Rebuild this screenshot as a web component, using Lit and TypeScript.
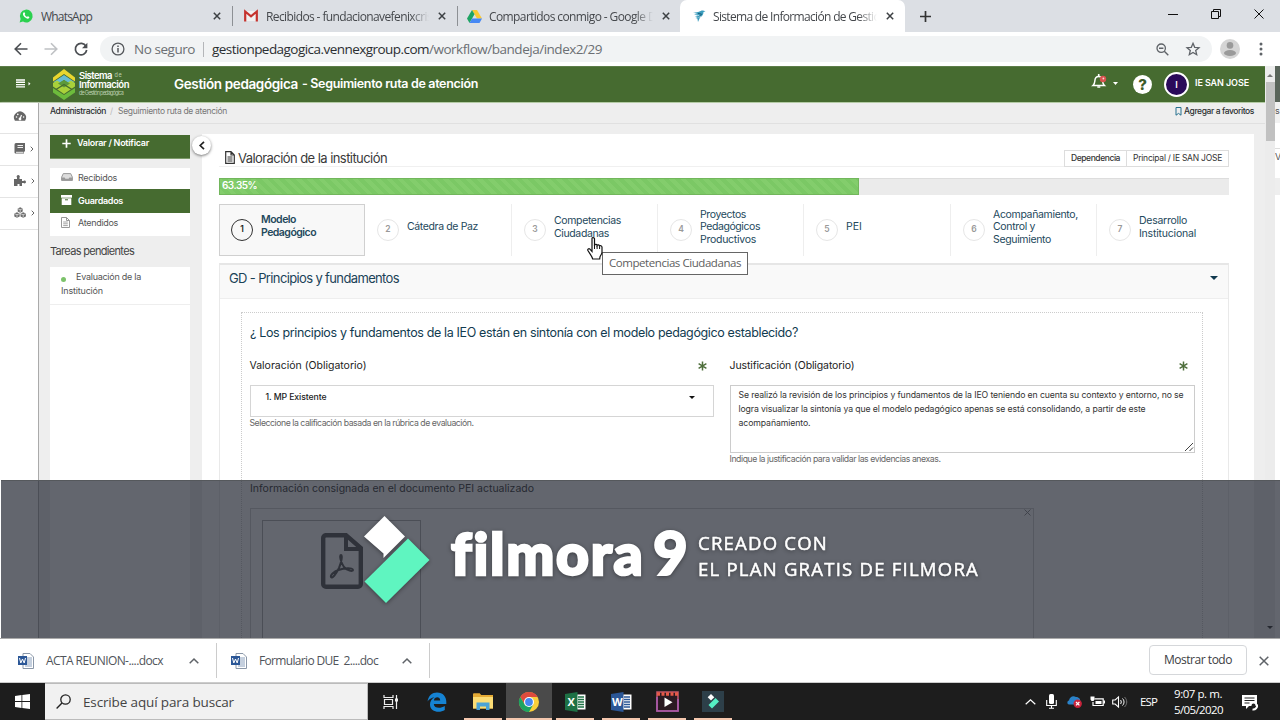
import { LitElement, html, svg, css } from "lit";
import { customElement, property } from "lit/decorators.js";

/* One line of text whose tracking is spread so that it fills a given width. */
@customElement("fit-text")
class FitText extends LitElement {
  @property() text = "";
  @property({ type: Number }) w = 0;
  static styles = css`
    :host { display: inline-block; white-space: pre; flex: none; }
    span { display: inline-block; }
  `;
  updated() {
    const s = this.renderRoot.querySelector("span") as HTMLElement;
    s.style.letterSpacing = "0";
    if (!this.w) return;
    const natural = s.getBoundingClientRect().width;
    s.style.letterSpacing = (this.w - natural) / this.text.length + "px";
  }
  render() {
    return html`<span>${this.text}</span>`;
  }
}

const t = (text: string, w = 0, cls = "") =>
  html`<fit-text class=${cls} .text=${text} .w=${w}></fit-text>`;

const icon = (w: number, h: number, body: unknown, cls = "") =>
  html`<svg class="ic ${cls}" width=${w} height=${h} viewBox="0 0 ${w} ${h}">${body}</svg>`;

const I = {
  whatsapp: icon(14, 14, svg`<path d="M.6 13.400l1-3.500A6.400 6.400 0 1 1 4 12.500z" fill="#2bd14f"/><path d="M4.600 3.500c.5-.4 1-.2 1.200.3l.4 1c0 .5-.5.7-.5 1 .5 1 1.300 1.700 2.300 2.100.4 0 .6-.7 1-.7l1.300.7c.3.5-.4 1.800-1.500 1.800C6.500 9.500 4 7 3.900 5.100c0-.7.3-1.300.7-1.600z" fill="#fff"/>`),
  gmail: icon(14, 12, svg`<path d="M1 1h12v10H1z" fill="#f0f0f0"/><path d="M1.200 11.500V1.500L7 6.300l5.800-4.800v10" fill="none" stroke="#c5322d" stroke-width="2.200"/>`),
  drive: icon(15, 13, svg`<path d="M5 0h5l5 8.600h-5z" fill="#fbc934"/><path d="M5 0L0 8.600 2.500 13 7.500 4.300z" fill="#1fa463"/><path d="M5 8.600h10L12.500 13h-10z" fill="#4688f4"/>`),
  bird: icon(14, 14, svg`<path d="M1 3.500c2 0 4 .2 6-.7 1.500-.8 2.500-1.500 4-1.300l2.500.7-2 .8c0 2.500-1.300 4.500-3.500 5.500L6 13l-.6-3.600L3.500 9l2.500-1-3-.8 2.700-.7L2 5l3.500-.5z" fill="#3b9cbd"/><path d="M6 4.500l3.500.5-2 3" fill="none" stroke="#17607c"/><path d="M4 6l3 .5M6.500 8.500L9 7" stroke="#dff1f7" stroke-width=".7"/>`),
  x: icon(8, 8, svg`<path d="M.8.8l6.400 6.400M7.200.8L.8 7.200" stroke="#3c4043" stroke-width="1.500"/>`),
  plus: icon(11, 11, svg`<path d="M5.500 0v11M0 5.500h11" stroke="#333" stroke-width="1.700"/>`),
  min: icon(10, 10, svg`<path d="M0 5.500h10" stroke="#111"/>`),
  restore: icon(10, 10, svg`<path d="M.5 2.500h7v7h-7zM2.500 2.500v-2h7v7h-2" fill="none" stroke="#111"/>`),
  close: icon(10, 10, svg`<path d="M.5.5l9 9M9.500.5l-9 9" stroke="#111"/>`),
  back: icon(14, 14, svg`<path d="M13.500 7H1.500M7 1.200L1.200 7 7 12.800" fill="none" stroke="#4b4e52" stroke-width="1.600"/>`),
  fwd: icon(14, 14, svg`<path d="M.5 7h12M7 1.200L12.800 7 7 12.800" fill="none" stroke="#bfc1c4" stroke-width="1.600"/>`),
  reload: icon(14, 14, svg`<path d="M12 4.200A5.700 5.700 0 1 0 12.700 8" fill="none" stroke="#4b4e52" stroke-width="1.700"/><path d="M13.400.8v5.400H8z" fill="#4b4e52"/>`),
  info: icon(14, 14, svg`<circle cx="7" cy="7" r="5.900" fill="none" stroke="#55585c" stroke-width="1.300"/><path d="M7 6v4.400M7 3.500v1.500" stroke="#55585c" stroke-width="1.500"/>`),
  lens: icon(13, 13, svg`<circle cx="5.200" cy="5.200" r="4.200" fill="none" stroke="#5f6368" stroke-width="1.300"/><path d="M8.300 8.300l4 4M3 5.200h4.400" stroke="#5f6368" stroke-width="1.400"/>`),
  star: icon(14, 14, svg`<path d="M7 1.300l1.700 4 4.300.4-3.300 2.800 1 4.200L7 10.500l-3.700 2.200 1-4.200L1 5.700l4.300-.4z" fill="none" stroke="#5f6368" stroke-width="1.300"/>`),
  user: icon(20, 20, svg`<circle cx="10" cy="10" r="10" fill="#d5d5d5"/><circle cx="10" cy="6.400" r="3.300" fill="#9a9a9a"/><ellipse cx="10" cy="14" rx="6" ry="3" fill="#9a9a9a"/>`),
  dots: icon(4, 14, svg`<circle cx="2" cy="2" r="1.500" fill="#5f6368"/><circle cx="2" cy="7" r="1.500" fill="#5f6368"/><circle cx="2" cy="12" r="1.500" fill="#5f6368"/>`),
  menu: icon(15, 9, svg`<path d="M0 1h9M0 3.300h9M0 5.600h9M0 7.900h9" stroke="#fff" stroke-width="1.400"/><path d="M12.500 3l2 1.700-2 1.700z" fill="#fff"/>`),
  logo: icon(24, 32, svg`<path d="M1 9.500L12 1l11 8.500v4L12 6 1 13.500z" fill="#e9d62f"/><path d="M1.500 14L12 7l10.500 7-3.500 2.700-7-4.700-7 4.700z" fill="#69bcd0"/><path d="M1 15l4-2.500L12 17l7-4.500 4 2.500v3.500L12 26 1 18.500z" fill="#a9d13a"/><path d="M6 15.500l6-3.500 6 3.500-6 4z" fill="#5d9a3a"/><path d="M1 20l11 7 11-7v4.500L12 32 1 24.500z" fill="#6dbb3c"/><path d="M4 21.500l8-5 8 5" fill="none" stroke="#466b30" stroke-width="1.400"/>`),
  bell: icon(15, 15, svg`<path d="M1 11.500c1.700-1.500 1.700-3 1.900-5C3.100 3.800 4.500 2.500 6.700 2.500s3.600 1.300 3.800 4c.2 2 .2 3.500 1.900 5z" fill="none" stroke="#fff" stroke-width="1.500"/><path d="M5.300 13h3M6.700 0v2.500" stroke="#fff" stroke-width="1.600"/><circle cx="11" cy="5" r="3.200" fill="#d9534f"/><circle cx="11.400" cy="4.500" r=".9" fill="#f9d6d5"/>`, "bell"),
  caretW: icon(5, 3, svg`<path d="M0 0h5L2.500 3z" fill="#fff"/>`),
  caret: icon(8, 4, svg`<path d="M0 0h8L4 4z" fill="#10394f"/>`),
  caretB: icon(6, 3, svg`<path d="M0 0h6L3 3z" fill="#111"/>`),
  book: icon(7, 9, svg`<path d="M1 .5h5v7.700L3.500 6.400 1 8.200z" fill="none" stroke="#24708e"/>`),
  dash: icon(12, 11, svg`<path d="M.9 9.700A6 6 0 1 1 11.100 9.700z" fill="#666"/><path d="M6 8l1.500-4" stroke="#fff" stroke-width="1.200"/><circle cx="6" cy="8" r="1.400" fill="#fff"/><circle cx="2.500" cy="6" r=".8" fill="#fff"/><circle cx="3.800" cy="3.400" r=".8" fill="#fff"/><circle cx="9.600" cy="6" r=".8" fill="#fff"/>`),
  bookF: icon(11, 11, svg`<path d="M2 0h9v8.500h-1v2H2C.5 10.500.5 9.800.5 9V2C.5.800 1 0 2 0z" fill="#666"/><path d="M3.500 2.500H9M3.500 4.500H9M2 9.300h7.500" stroke="#fff" stroke-width=".9"/>`),
  plugin: icon(12, 11, svg`<path d="M0 4h3V2.500C2 1.500 3 0 4.200 0s2.300 1.500 1.300 2.500V4H8v2h1.500c1-1 2.500-.3 2.500 1s-1.500 2-2.500 1H8v3H5.500V9h-2v2H0z" fill="#666"/>`),
  cubes: icon(12, 11, svg`<path d="M6.200.3L8.700 1.500v3L6.200 5.700 3.700 4.500v-3zM3 5.200l2.700 1.200v3L3 10.700.3 9.400v-3zM9.200 5.200l2.700 1.200v3l-2.700 1.300-2.700-1.300v-3z" fill="#6d6d6d"/><path d="M3.700 1.700l2.500 1 2.500-1M.5 6.700l2.500 1 2.700-1M6.500 6.700l2.700 1 2.500-1M6.200 2.700v2.500M3 7.700v2.500M9.200 7.700v2.500" fill="none" stroke="#fff" stroke-width=".6"/>`),
  chev: icon(4, 6, svg`<path d="M.7.7L3 3 .7 5.300" fill="none" stroke="#666"/>`),
  plusW: icon(9, 9, svg`<path d="M4.500.3v8.400M.3 4.500h8.400" stroke="#fff" stroke-width="1.700"/>`, "pw"),
  inbox: icon(12, 8, svg`<path d="M2.300.6h7.400L11.400 4.200v3.200H.6V4.200z" fill="#ddd" stroke="#999"/><path d="M.6 4.500h3l.8 1.200h3.200l.8-1.200h3v3H.6z" fill="#999"/>`),
  archive: icon(11, 10, svg`<path d="M0 0h11v2.700H0z" fill="#fff"/><path d="M.7 3.300h9.600V10H.7z" fill="#fff"/><path d="M4 4.800h3" stroke="#466b30"/>`),
  doc: icon(9, 11, svg`<path d="M.5.500h5l3 3v7h-8zM5.500.5v3h3" fill="none" stroke="#999"/><path d="M2.200 5h4.600M2.200 6.800h4.600M2.200 8.600h4.600" stroke="#999" stroke-width=".9"/>`),
  docB: icon(10, 13, svg`<path d="M.7.700h5.300l3.300 3.300v8.300H.7zM6 .7V4h3.300" fill="none" stroke="#333" stroke-width="1.200"/><path d="M2.500 6h5M2.500 8h5M2.500 10h5" stroke="#333"/>`),
  left: icon(6, 9, svg`<path d="M5 .8L1.200 4.500 5 8.200" fill="none" stroke="#222" stroke-width="1.700"/>`),
  ast: icon(9, 10, svg`<path d="M4.500.5v9M.6 2.700l7.800 4.600M8.400 2.700L.6 7.300" stroke="#4f6f3c" stroke-width="1.500"/>`),
  grip: icon(8, 8, svg`<path d="M0 8L8 0M4.500 8L8 4.500" stroke="#444" stroke-width="1"/>`),
  xs: icon(7, 7, svg`<path d="M.5.5l6 6M6.500.5l-6 6" stroke="#777" stroke-width=".9"/>`),
  pdf: icon(42, 56, svg`<path d="M4 2.200h21L39.800 15v36a2.800 2.800 0 0 1-2.800 2.800H5A2.800 2.800 0 0 1 2.200 51V5A2.800 2.800 0 0 1 5 2.200z" fill="none" stroke="#444" stroke-width="4.400"/><path d="M25 2v14h15" fill="none" stroke="#444" stroke-width="4"/><path d="M20 22c-2 0 0 8 3 12 3 3.600 9 5 9 3 0-2.600-9-2-14.500 0-5 1.700-8.300 5.200-7.500 7 1.300 2 5-3 8-9 2.600-6 3.600-13 2-13z" fill="none" stroke="#444" stroke-width="2"/>`),
  up: icon(10, 6, svg`<path d="M.7 5.300L5 1l4.300 4.300" fill="none" stroke="#5f6368" stroke-width="1.500"/>`),
  closeD: icon(10, 10, svg`<path d="M.7.7l8.600 8.600M9.300.7L.7 9.300" stroke="#5f6368" stroke-width="1.500"/>`),
  word: icon(16, 16, svg`<path d="M5 .5h7l3.500 3.500v11.500H5z" fill="#fff" stroke="#8a97a8"/><path d="M9 5h5M9 7h5M9 9h5M9 11h5M7 13h7" stroke="#8aa0bd"/><path d="M0 3h9v9H0z" fill="#2b5797"/><path d="M1.500 5l1.300 5L4.500 6l1.700 4 1.300-5" fill="none" stroke="#fff"/>`),
  win: icon(15, 15, svg`<path d="M0 2l6.500-.9v6H0zM7.300 1L15 0v7.100H7.300zM0 7.900h6.500v6L0 13zM7.300 7.900H15V15l-7.700-1z" fill="#fff"/>`),
  search: icon(15, 15, svg`<circle cx="9.500" cy="5.500" r="4.700" fill="none" stroke="#222" stroke-width="1.300"/><path d="M6 9L.6 14.400" stroke="#222" stroke-width="1.400"/>`),
  task: icon(16, 14, svg`<path d="M1 0v2.500h9V0M1 14v-2.500h9V14M1.500 4.500h8v5h-8z" fill="none" stroke="#eee" stroke-width="1.200"/><path d="M13.500 0v14" stroke="#eee" stroke-width="1.200"/><path d="M12 3.500h3v3h-3z" fill="#eee"/>`),
  edge: icon(20, 20, svg`<path d="M.6 9.400C1.200 3.800 5.300.5 10 .5c6 0 9.300 4.300 9.300 9.200v2.200H6.800c.2 4.300 6.400 5 11 2.100v4C12.700 21.300 3 20.200 3 12.500c0-3 1.700-5.800 4.500-7.200C4.500 5.800 2 7.200.6 9.400zM6.900 8.400h6.300c0-4.400-6-4-6.300 0z" fill="#1583d3"/>`),
  folder: icon(20, 17, svg`<path d="M0 1.500C0 .7.500.2 1.200.2h5.500L8.200 2H20v13.500H0z" fill="#e5ab35"/><path d="M0 4h20v11.500H0z" fill="#fbdc74"/><path d="M3.500 17V9.500h13V17H13v-3.500H7V17z" fill="#4ba3d6"/>`),
  chrome: icon(20, 20, svg`<circle cx="10" cy="10" r="10" fill="#f9cf3b"/><path d="M1.300 5A10 10 0 0 1 18.700 5H10l-4.300 7.500z" fill="#dd4b3e"/><path d="M1.300 5A10 10 0 0 0 10 20l4.300-7.500H5.700z" fill="#1da362"/><circle cx="10" cy="10" r="5" fill="#fff"/><circle cx="10" cy="10" r="3.900" fill="#4688f1"/>`),
  film: icon(23, 21, svg`<path d="M1 1h21v19H1z" fill="#2b1a22" stroke="#c0566c" stroke-width="1.600"/><path d="M1 3h21" stroke="#e65a48" stroke-width="3.500" stroke-dasharray="3 1.500"/><path d="M1 6v14h21V8" fill="none" stroke="#a55bb0" stroke-width="1.600"/><path d="M8.500 6.500l8 4.700-8 4.700z" fill="#fff"/>`),
  filmora: icon(22, 21, svg`<path d="M0 0h22v21H0z" fill="#2d3f49"/><path d="M9 3l3.300 3.300L9 9.600 5.700 6.300z" fill="#fff"/><path d="M13.500 7l3.500 3.500-7 7L6.500 14z" fill="#55efc4"/>`),
  upW: icon(11, 6, svg`<path d="M.7 5.300L5.500.8l4.800 4.500" fill="none" stroke="#fff" stroke-width="1.200"/>`, "i1"),
  mic: icon(11, 15, svg`<rect x="3" y="0" width="5" height="10" rx="1.500" fill="#fff"/><path d="M.7 6v5.500h9.600V6M5.500 11v3.500M3 14.300h5" fill="none" stroke="#fff" stroke-width="1.100"/>`, "i1"),
  cloud: icon(15, 13, svg`<path d="M2 9.500C0 9.500-.3 6 2 5.500 2.500 2 6 0 9 2c3 0 5 2.500 4 5l-4 2.500z" fill="#2a82c9"/><circle cx="10.700" cy="8.700" r="4.200" fill="#c8233b"/><path d="M9 7l3.400 3.400M12.400 7L9 10.400" stroke="#fff" stroke-width="1.200"/>`, "i2"),
  batt: icon(15, 11, svg`<path d="M4.500 2.800h8.700v6.700H3V6" fill="none" stroke="#fff" stroke-width="1.200"/><path d="M5.500 5h6v3h-6zM13.500 4.500H15v3h-1.500zM.5.500h4v3l-1 1.500h-2l-1-1.500z" fill="#fff"/>`, "i3"),
  vol: icon(16, 12, svg`<path d="M.7 4h2.500L6.500.9v10.200L3.200 8H.7z" fill="none" stroke="#fff" stroke-width="1.100"/><path d="M8.500 4c1 1 1 3 0 4M10.500 2.500c2 2 2 5 0 7" fill="none" stroke="#fff"/><path d="M12.500 1c3 3 3 7 0 10" fill="none" stroke="#777"/>`, "i4"),
  note: icon(16, 16, svg`<path d="M0 1h15v11H7l-3 3v-3H0z" fill="#fff"/><path d="M2.500 4h10M2.500 6.500h10M2.500 9h5" stroke="#222"/><path d="M10.500 15.500a4 4 0 0 0 4.500-5" fill="none" stroke="#fff" stroke-width="2"/><circle cx="11.500" cy="11.500" r="2" fill="#222"/>`),
};

const office = (letter: string, color: string) =>
  icon(21, 20, svg`<path d="M10 2.500h10.500v15H10z" fill="#fff"/><path d="M13 5h6M13 7.500h6M13 10h6M13 12.500h6M13 15h6" stroke=${color} stroke-width="1.300"/><path d="M0 2L12.500 0v20L0 18z" fill=${color}/><text x="6.200" y="14.300" text-anchor="middle" font-family="Open Sans, sans-serif" font-weight="700" font-size="11" fill="#fff">${letter}</text>`);

const tabs = [
  { ic: I.whatsapp, label: "WhatsApp", w: 51, cls: "t1" },
  { ic: I.gmail, label: "Recibidos - fundacionavefenixcris", w: 166, cls: "t2" },
  { ic: I.drive, label: "Compartidos conmigo - Google D", w: 167, cls: "t3" },
  { ic: I.bird, label: "Sistema de Información de Gestió", w: 167, cls: "t4" },
];

const steps: [string, number][][] = [
  [["Modelo", 35], ["Pedagógico", 55]],
  [["Cátedra de Paz", 71]],
  [["Competencias", 67], ["Ciudadanas", 55]],
  [["Proyectos", 46], ["Pedagógicos", 60], ["Productivos", 56]],
  [["PEI", 16]],
  [["Acompañamiento,", 85], ["Control y", 42], ["Seguimiento", 58]],
  [["Desarrollo", 48], ["Institucional", 57]],
];

const apps = [
  { ic: I.task, run: false },
  { ic: I.edge, run: false },
  { ic: I.folder, run: true },
  { ic: I.chrome, run: true, on: true },
  { ic: office("X", "#1e7145"), run: true },
  { ic: office("W", "#2b5797"), run: true },
  { ic: I.film, run: true },
  { ic: I.filmora, run: true },
];

@customElement("app-root")
class AppRoot extends LitElement {
  static styles = css`
    :host { display: block; width: 1280px; height: 720px; overflow: hidden; position: relative; font-family: Inter, "Liberation Sans", sans-serif; color: #333; background: #fff; }
    * { box-sizing: border-box; }
    .ic { display: block; flex: none; overflow: visible; }
    .row { display: flex; align-items: center; }
    .seg { font-family: "Open Sans", "Noto Sans", sans-serif; }
    .grow { flex: 1; }

    .tabs { display: flex; height: 32px; background: #dcdfe4; }
    .tab { display: flex; align-items: center; height: 32px; font-size: 12px; color: #45484c; }
    .t1 { width: 233px; padding-left: 19px; border-right: 1px solid #8d9094; }
    .t2 { width: 224px; padding-left: 11px; }
    .t3 { width: 223px; padding-left: 9px; border-left: 1px solid #8d9094; }
    .t4 { width: 225px; padding-left: 12px; background: #fff; border-radius: 7px 7px 0 0; }
    .t1, .t3 { border-image: linear-gradient(transparent 22%, #8d9094 22% 78%, transparent 78%) 1; }
    .clip { width: 168px; margin: 0 4px 0 8px; overflow: hidden; display: flex; mask-image: linear-gradient(90deg, #000 86%, transparent 97%); }
    .t3 .clip { margin-left: 7px; width: 169px; }
    .t4 .clip { margin-left: 7px; width: 169px; }
    .t1 .clip { mask-image: none; }
    .win { width: 375px; padding: 0 0 5px 15px; }
    .win .a { margin: 5px 237px 0 0; }
    .win .b { margin-right: 33px; }

    .bar { height: 34px; background: #fff; padding-left: 14px; }
    .bar > .ic { margin-right: 16px; }
    .omni { width: 1112px; height: 26px; margin: 0 8px 0 -4px; border-radius: 13px; background: #f1f3f4; padding: 0 12px 0 11px; font-size: 13.500px; color: #6b6f73; }
    .omni .no { margin: 0 8px 0 9px; }
    .omni .lensgap { width: 17px; }
    .sep { width: 1px; height: 15px; background: #b4b6b9; margin-right: 8px; }
    .dk { color: #2b2e31; }
    .bar > .ic:last-child { margin: 0 0 0 3px; }

    .site { display: flex; height: 572px; overflow: hidden; }
    .page { width: 1265px; }
    .head { height: 37px; background: #466b30; border-bottom: 1px solid #b4cba5; border-top: 1px solid #5d7d49; color: #fff; padding: 0 16px 2px 16px; }
    .logogap { width: 21px; }
    .logoTxt { display: flex; flex-direction: column; margin: 2px 0 0 3px; font-weight: 600; font-size: 9.500px; line-height: 9px; width: 95px; }
    .logoTxt .xs { font-size: 5.500px; font-weight: 400; color: #b9cbac; }
    .logoTxt .row { height: 9px; }
    .h1 { font-size: 13.500px; font-weight: 600; margin-right: 4px; }
    .h2 { font-size: 12.500px; font-weight: 600; }
    .bell { margin: -5px 6px 0 0; }
    .q { width: 19px; height: 19px; border-radius: 50%; background: #fff; color: #3c5c29; font-size: 15px; font-weight: 800; justify-content: center; margin: 2px 12px 0 15px; }
    .me { width: 25px; height: 25px; border-radius: 50%; background: #2a0b5a; border: 2px solid #fff; font-size: 9px; font-weight: 600; justify-content: center; margin: 1px 6px 0 0; }
    .name { font-size: 9px; font-weight: 600; margin-top: -3px; }

    .below { display: flex; height: 535px; }
    .rail { width: 39px; background: #fff; border-right: 1px solid #aaa; box-shadow: 1px 0 2px #ccc; }
    .rail .row { height: 32px; border-bottom: 1px solid #e4e4e4; padding: 0 0 2px 14px; gap: 5px; }
    .rail .row:first-child { height: 31px; padding-bottom: 4px; }
    .main { width: 1226px; background: #eee; }
    .crumb { height: 21px; border-bottom: 1px solid #e0e0e0; padding: 0 11px 4px 11px; font-size: 8.500px; color: #777; }
    .crumb .dk { font-weight: 500; }
    .crumb .sl { margin: 0 5px 0 4px; color: #bbb; }
    .cols { display: flex; height: 514px; }
    .side { width: 140px; margin: 11px 12px 0 11px; font-size: 9px; color: #555; position: relative; }
    .btn { height: 24px; background: #466b30; color: #fff; font-weight: 600; padding: 0 0 8px 12px; gap: 6px; border-bottom: 1px solid #7c9a69; }
    .pw { margin-top: 2px; }
    .list { background: #fff; margin-top: 9px; height: 68px; }
    .list .row { padding-left: 11px; gap: 5px; height: 23px; }
    .list .row:first-child { height: 21px; padding-bottom: 3px; }
    .list .row.on { background: #466b30; color: #fff; font-weight: 600; height: 24px; padding-bottom: 2px; gap: 6px; }
    .list .row:last-child { padding-bottom: 5px; gap: 8px; }
    .pend { font-size: 11px; color: #444; margin: 8px 0 9px; height: 14px; line-height: 14px; }
    .todo { background: #fff; height: 400px; padding: 3px 0 0 11px; line-height: 14px; }
    .todo .box { border-bottom: 1px solid #eee; height: 35px; margin-left: -11px; padding-left: 11px; }
    .dot { width: 5px; height: 5px; border-radius: 50%; background: #7cc26a; margin: 4px 10px 0 0; }
    .fold { position: absolute; left: 142px; top: 1px; width: 19px; height: 19px; border-radius: 50%; background: #fff; box-shadow: 0 1px 3px #777; display: flex; align-items: center; justify-content: center; }

    .panel { width: 1052px; background: #fff; margin-top: 10px; padding: 16px 25px 0 17px; }
    .ptitle { height: 17px; width: 1010px; }
    .ptitle .tt { height: 17px; padding: 0 0 1px 6px; gap: 3px; font-size: 13px; color: #3a3a3a; border-bottom: 1px solid #f0f0f0; }
    .badge { height: 17px; border: 1px solid #ddd; font-size: 8.500px; color: #333; }
    .badge .c { height: 15px; padding: 0 6px 1px; }
    .badge .c:first-child { font-weight: 500; border-right: 1px solid #ddd; }
    .prog { width: 1010px; height: 17px; margin-top: 11px; background: #ebebeb; border-top: 1px solid #ddd; }
    .fill { height: 17px; margin-top: -1px; border: 1px solid #72b65c; background: repeating-linear-gradient(45deg, #83cd6c 0 4px, #7bc865 4px 8px); color: #fff; font-size: 10px; font-weight: 600; line-height: 12px; padding-left: 2px; }
    .steps { display: grid; grid-template-columns: 146px 147px 146px 146px 147px 146px 132px; height: 52px; margin-top: 9px; width: 1010px; }
    .step { border-right: 1px solid #eee; padding-left: 12px; color: #23485c; font-size: 10.500px; line-height: 12.200px; }
    .step:last-child { border: 0; }
    .num { width: 22px; height: 22px; border-radius: 50%; border: 1.500px solid #e6e6e6; color: #999; font-size: 8.500px; font-weight: 600; justify-content: center; margin: -1px 8px 0 0; flex: none; }
    .step .ls { display: flex; flex-direction: column; margin-top: -5px; }
    .step.on { background: #f8f8f8; border: 1px solid #d0d0d0; padding-left: 11px; }
    .step.on .num { border-color: #333; color: #222; }
    .step.on .ls { font-weight: 600; margin-top: -7px; }
    .sect { margin-top: 7px; width: 1010px; border: 1px solid #e9e9e9; border-top: 2px solid #e6e6e6; height: 400px; }
    .sh { height: 34px; background: #f9f9f9; border-bottom: 1px solid #eee; padding: 0 10px 7px 9px; font-size: 13px; color: #1b4358; }
    .q1 { margin: 13px 0 0 21px; width: 962px; border: 1px dotted #ccc; height: 360px; padding: 10px 8px; }
    .ask { font-size: 12.500px; color: #123c50; height: 18px; }
    .two { display: grid; grid-template-columns: 464px 465px; column-gap: 16px; margin: 13px 0 0 -.5px; font-size: 8.700px; color: #666; }
    .lab { height: 22px; justify-content: space-between; font-size: 10.500px; color: #222; padding: 0 7px 0 0; margin-bottom: 9px; }
    .lab .ic { margin-top: 2px; }
    .sel { height: 32px; border: 1px solid #d5d5d5; padding: 0 18px 8px 15px; justify-content: space-between; color: #222; font-weight: 500; }
    .area { height: 68px; border: 1px solid #ccc; padding: 2px 0 0 8px; line-height: 14px; color: #333; display: flex; flex-direction: column; position: relative; }
    .area .g { position: absolute; right: 1px; bottom: 1px; }
    .help { height: 13px; line-height: 13px; }
    .doc { font-size: 10.500px; color: #222; margin-top: 16px; height: 13px; }
    .up { margin-top: 13px; width: 784px; height: 200px; border: 1px solid #ccc; padding: 11px 2px 0 11px; display: flex; justify-content: space-between; }
    .xx { margin-top: -11px; }
    .file { width: 159px; height: 200px; border: 1px solid #aaa; padding: 12px 0 0 58px; }

    .sb { width: 10px; background: #ececec; display: flex; flex-direction: column; align-items: center; padding-top: 8px; }
    .thumb { width: 9px; height: 59px; background: #c1c1c1; margin: 5px 0 485px; }
    .edge { width: 5px; background: linear-gradient(#59645a 0 36px, #f1f1f1 36px 57px, #fff 57px 82px, #ddd 82px 83px, #fff 83px 112px, #eee 112px 129px, #fff 129px); overflow: hidden; font-size: 9px; color: #555; display: flex; flex-direction: column; }
    .edge div { height: 46px; line-height: 90px; }

    .dl { height: 45px; background: #fff; font-size: 12px; color: #50545a; border-bottom: 1px solid #ccc; border-top: 1px solid #aaa; padding-right: 11px; }
    .item { width: 217px; height: 35px; padding: 0 17px 0 18px; border-right: 1px solid #ccc; gap: 12px; }
    .item + .item { width: 213px; padding-left: 14px; }
    .item .ic:last-child { margin-left: auto; }
    .all { width: 98px; height: 30px; border: 1px solid #d5d7da; border-radius: 4px; justify-content: center; margin: -2px 12px 0 0; padding-bottom: 1px; color: #3c4043; }

    .task { height: 37px; background: #1d1d1d; color: #fff; padding-right: 22px; }
    .start { width: 45px; height: 37px; justify-content: center; }
    .find { width: 323px; height: 37px; background: #f1f1f1; color: #444; font-size: 13.500px; padding-left: 11px; gap: 12px; border: 1px solid #bbb; border-left: 0; }
    .app { width: 46px; height: 37px; justify-content: center; position: relative; }
    .app.run::after { content: ""; position: absolute; bottom: 0; left: 4px; right: 4px; height: 2px; background: #f4c7ae; }
    .app.on { background: #4a4a4a; }
    .app.on::after { left: 0; right: 0; }
    .i1 { margin-right: 10px; }
    .i2 { margin-right: 8px; }
    .i3 { margin-right: 7px; }
    .i4 { margin-right: 12px; }
    .clock { font-size: 11.500px; line-height: 16px; display: flex; flex-direction: column; margin: 0 19px 0 17px; }
    .esp { font-size: 11.500px; margin-top: -1px; }

    .tip { position: absolute; left: 602px; top: 252px; width: 146px; height: 23px; background: #fff; border: 1px solid #666; color: #606060; font-size: 11.500px; padding: 0 6px 2px; }
    .cursor { position: absolute; left: 587px; top: 237px; }
    .mark { position: absolute; left: 1px; top: 480px; width: 1279px; height: 158px; background: rgba(39, 43, 54, .72); border-top: 1px solid #55585c; color: #fff; }
    .mark > * { position: absolute; filter: drop-shadow(0 1px 2px rgba(0, 0, 0, .4)); }
    .fm { left: 450px; top: 36px; font: 900 57px/72px Lato, sans-serif; -webkit-text-stroke: 2.500px #fff; }
    .nine { left: 652px; top: 34px; font: 900 60px/74px Lato, sans-serif; -webkit-text-stroke: 2px #fff; }
    .c1 { left: 697px; top: 49px; font: 400 18.500px/26px "Open Sans", sans-serif; -webkit-text-stroke: .5px #fff; }
    .c2 { top: 75px; }
    .gem { left: 363px; top: 35px; }
  `;

  render() {
    return html`
      <div class="tabs seg">
        ${tabs.map((b) => html`<div class="tab ${b.cls}">${b.ic}<div class="clip">${t(b.label, b.w)}</div>${I.x}</div>`)}
        <div class="win row"><div class="a">${I.plus}</div>${I.min}<span class="b"></span>${I.restore}<span class="b"></span>${I.close}</div>
      </div>
      <div class="bar row seg">
        ${I.back}${I.fwd}${I.reload}
        <div class="omni row">
          ${I.info}${t("No seguro", 61, "no")}<i class="sep"></i>${t("gestionpedagogica.vennexgroup.com", 217, "dk")}${t("/workflow/bandeja/index2/29", 173)}
          <span class="grow"></span>${I.lens}<span class="lensgap"></span>${I.star}
        </div>
        ${I.user}${I.dots}
      </div>

      <div class="site">
        <div class="page">
          <div class="head row">
            ${I.menu}<span class="logogap"></span>${I.logo}
            <div class="logoTxt"><div class="row">${t("Sistema", 33)}&nbsp;${t("de", 8, "xs")}</div>${t("Información", 50)}${t("de Gestión pedagógica", 44, "xs")}</div>
            ${t("Gestión pedagógica", 124, "h1")}${t("- Seguimiento ruta de atención", 176, "h2")}
            <span class="grow"></span>${I.bell}${I.caretW}
            <div class="q row">?</div><div class="me row">I</div>${t("IE SAN JOSE", 54, "name")}
          </div>
          <div class="below">
            <div class="rail">
              <div class="row">${I.dash}</div>
              ${[I.bookF, I.plugin, I.cubes].map((i) => html`<div class="row">${i}${I.chev}</div>`)}
            </div>
            <div class="main">
              <div class="crumb row">${t("Administración", 56, "dk")}<span class="sl">/</span>${t("Seguimiento ruta de atención", 109)}<span class="grow"></span>${I.book}&nbsp;${t("Agregar a favoritos", 70, "dk")}</div>
              <div class="cols">
                <div class="side">
                  <div class="btn row">${I.plusW}${t("Valorar / Notificar", 72)}</div>
                  <div class="list">
                    <div class="row">${I.inbox}${t("Recibidos", 39)}</div>
                    <div class="row on">${I.archive}${t("Guardados", 45)}</div>
                    <div class="row">${I.doc}${t("Atendidos", 40)}</div>
                  </div>
                  <div class="pend">${t("Tareas pendientes", 84)}</div>
                  <div class="todo"><div class="box"><div class="row"><i class="dot"></i>${t("Evaluación de la", 65)}</div>${t("Institución", 42)}</div></div>
                  <div class="fold">${I.left}</div>
                </div>
                <div class="panel">
                  <div class="ptitle row">
                    <div class="tt row grow">${I.docB}${t("Valoración de la institución", 149)}</div>
                    <div class="badge row"><div class="c row">${t("Dependencia", 49)}</div><div class="c row">${t("Principal / IE SAN JOSE", 89)}</div></div>
                  </div>
                  <div class="prog"><div class="fill" style="width:640px">${t("63.35%", 35)}</div></div>
                  <div class="steps">
                    ${steps.map((s, i) => html`<div class="step row ${i ? "" : "on"}"><div class="num row">${i + 1}</div><div class="ls">${s.map(([x, w]) => t(x, w))}</div></div>`)}
                  </div>
                  <div class="sect">
                    <div class="sh row">${t("GD - Principios y fundamentos", 170)}<span class="grow"></span>${I.caret}</div>
                    <div class="q1">
                      <div class="ask row">${t("¿ Los principios y fundamentos de la IEO están en sintonía con el modelo pedagógico establecido?", 548)}</div>
                      <div class="two">
                        <div>
                          <div class="lab row">${t("Valoración (Obligatorio)", 117)}${I.ast}</div>
                          <div class="sel row">${t("1. MP Existente", 61)}${I.caretB}</div>
                          <div class="help">${t("Seleccione la calificación basada en la rúbrica de evaluación.", 224)}</div>
                        </div>
                        <div>
                          <div class="lab row">${t("Justificación (Obligatorio)", 125)}${I.ast}</div>
                          <div class="area">
                            ${t("Se realizó la revisión de los principios y fundamentos de la IEO teniendo en cuenta su contexto y entorno, no se", 445)}
                            ${t("logra visualizar la sintonía ya que el modelo pedagógico apenas se está consolidando, a partir de este", 407)}
                            ${t("acompañamiento.", 72)}
                            <div class="g">${I.grip}</div>
                          </div>
                          <div class="help">${t("Indique la justificación para validar las evidencias anexas.", 211)}</div>
                        </div>
                      </div>
                      <div class="doc">${t("Información consignada en el documento PEI actualizado", 284)}</div>
                      <div class="up"><div class="file">${I.pdf}</div><div class="xx">${I.xs}</div></div>
                    </div>
                  </div>
                </div>
              </div>
            </div>
          </div>
        </div>
        <div class="sb">${icon(6, 3, svg`<path d="M0 3h6L3 0z" fill="#777"/>`)}<div class="thumb"></div>${icon(6, 3, svg`<path d="M0 0h6L3 3z" fill="#222"/>`)}</div>
        <div class="edge"><div>s</div><div>V</div></div>
      </div>

      <div class="dl row seg">
        <div class="item row">${I.word}${t("ACTA REUNION-....docx", 117)}${I.up}</div>
        <div class="item row">${I.word}${t("Formulario DUE  2....doc", 119)}${I.up}</div>
        <span class="grow"></span><div class="all row">${t("Mostrar todo", 68)}</div>${I.closeD}
      </div>
      <div class="task row seg">
        <div class="start row">${I.win}</div>
        <div class="find row">${I.search}${t("Escribe aquí para buscar", 151)}</div>
        ${apps.map((a) => html`<div class="app row ${a.run ? "run" : ""} ${a.on ? "on" : ""}">${a.ic}</div>`)}
        <span class="grow"></span>
        ${I.upW}${I.mic}${I.cloud}${I.batt}${I.vol}
        ${t("ESP", 17, "esp")}
        <div class="clock">${t("9:07 p. m.", 48)}${t("5/05/2020", 49)}</div>
        ${I.note}
      </div>

      <div class="tip row seg">${t("Competencias Ciudadanas", 132)}</div>
      <div class="mark">
        <div class="gem">${icon(67, 88, svg`<path d="M20.500 0L41 20.500 19.500 42v-4.500L0 20.500z" fill="#fff"/><path d="M44 22.500L65.500 44 22 87 .5 65.500z" fill="#5ff5c0"/>`)}</div>
        ${t("filmora", 193, "fm")}${t("9", 0, "nine")}
        ${t("CREADO CON", 130, "c1")}${t("EL PLAN GRATIS DE FILMORA", 281, "c1 c2")}
      </div>
      <div class="cursor">${icon(17, 23, svg`<path d="M5 1.500C5 .2 7.300.2 7.500 1.700V9l.2-1c.6-1.200 2.300-.8 2.400.4.500-.9 2.200-.6 2.400.6.800-.7 2.300-.2 2.500 1.200v5c0 1.500-1.300 3.300-2 4.500L12.700 22h-7C5 19 2.500 16.500.9 13.500c-.6-1.500 1-2.300 2-1.300L5 14.500z" fill="#fff" stroke="#111" stroke-width="1.200"/><path d="M7.500 8v4M10.100 9v3M12.600 9.500V12" stroke="#111"/>`)}</div>
    `;
  }
}
